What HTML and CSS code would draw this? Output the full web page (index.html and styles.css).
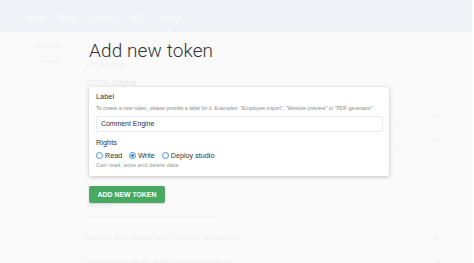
FILE: index.html
```html
<!DOCTYPE html>
<html lang="en">
<head>
<meta charset="utf-8">
<title>Add new token</title>
<link rel="stylesheet" href="styles.css">
</head>
<body>
<div class="page">
  <header class="nav">
    <span class="nav-item">Home</span>
    <span class="nav-item">Docs</span>
    <span class="nav-item">Schemas</span>
    <span class="nav-item">API</span>
    <span class="nav-item active">Settings</span>
  </header>
  <div class="layout">
    <aside class="sidebar">
      <div class="side-item">Overview</div>
      <div class="side-item sub">Tokens</div>
    </aside>
    <main class="content">
      <h2 class="bg-title">API Settings</h2>
      <h3 class="bg-section">CORS Origins</h3>
      <div class="bg-row"><span></span><span class="dot"></span></div>
      <div class="bg-row"><span></span><span class="dot"></span></div>
      <h3 class="bg-section tokens">Tokens</h3>
      <div class="bg-row"><span>Comment Import (Read / Write) - created 2 minutes ago</span><span class="dot"></span></div>
      <div class="bg-row"><span>Website preview (Read / Write) - created 4 months ago</span><span class="dot"></span></div>
    </main>
  </div>
</div>

<div class="overlay">
  <div class="dialog">
    <h1 class="dialog-title">Add new token</h1>
    <div class="card">
      <div class="field-label">Label</div>
      <div class="field-help">To create a new token, please provide a label for it. Examples: "Employee import", "Website preview" or "PDF generator"</div>
      <div class="text-input">Comment Engine</div>
      <div class="field-label rights">Rights</div>
      <div class="radios">
        <span class="radio"><span class="radio-circle"></span>Read</span>
        <span class="radio"><span class="radio-circle checked"></span>Write</span>
        <span class="radio"><span class="radio-circle"></span>Deploy studio</span>
      </div>
      <div class="field-hint">Can read, write and delete data.</div>
    </div>
    <button class="btn-primary">ADD NEW TOKEN</button>
  </div>
</div>
</body>
</html>
```

FILE: styles.css
```css
* {
  box-sizing: border-box;
}

html, body {
  margin: 0;
  padding: 0;
}

body {
  width: 474px;
  height: 263px;
  overflow: hidden;
  background: #fdfdfd;
  font-family: "Liberation Sans", Arial, sans-serif;
  position: relative;
}

/* ---------- background (dimmed) page ---------- */
.page {
  width: 472px;
  height: 263px;
  background: #f9f9f9;
  display: flex;
  flex-direction: column;
}

.nav {
  height: 32px;
  background: #eef3f7;
  display: flex;
  align-items: center;
  padding-left: 26px;
  gap: 14px;
  flex-shrink: 0;
}

.nav-item {
  font-size: 7px;
  color: #f8fafc;
  padding-top: 2px;
  position: relative;
}

.nav-item.active::after {
  content: "";
  position: absolute;
  left: 50%;
  bottom: -12px;
  margin-left: -3px;
  border-left: 3px solid transparent;
  border-right: 3px solid transparent;
  border-bottom: 3px solid #f9f9f9;
}

.layout {
  flex: 1;
  display: flex;
}

.sidebar {
  width: 72px;
  padding-top: 10px;
  border-right: 1px solid #f7f7f7;
  display: flex;
  flex-direction: column;
  align-items: flex-end;
  padding-right: 10px;
  gap: 7px;
}

.side-item {
  font-size: 6px;
  line-height: 8px;
  color: #ececec;
}

.content {
  flex: 0 0 370px;
  padding-left: 14px;
  padding-top: 29px;
  display: flex;
  flex-direction: column;
  align-items: stretch;
}

.bg-title {
  margin: 0;
  font-size: 7px;
  line-height: 8px;
  font-weight: normal;
  color: #efefef;
}

.bg-section {
  margin: 9px 0 0;
  align-self: flex-start;
  font-size: 8px;
  line-height: 10px;
  font-weight: normal;
  color: #e3e6e9;
  padding-bottom: 2px;
  border-bottom: 1px solid #f0f0f0;
}

.bg-section.tokens {
  margin-top: 50px;
  padding-bottom: 5px;
  width: 130px;
  color: #eceef0;
}

.bg-row {
  height: 23px;
  display: flex;
  align-items: center;
  justify-content: space-between;
  font-size: 6px;
  color: #ededed;
  padding-right: 3px;
  border-bottom: 1px solid #f6f6f6;
}

.bg-section + .bg-row {
  margin-top: 14px;
}

.bg-section.tokens + .bg-row {
  margin-top: 10px;
}

.dot {
  width: 3px;
  height: 3px;
  border-radius: 50%;
  background: #ececec;
}

/* ---------- dialog overlay ---------- */
.overlay {
  position: absolute;
  inset: 0;
  background: rgba(255, 255, 255, 0.15);
}

.dialog {
  padding: 41px 0 0 89px;
  display: flex;
  flex-direction: column;
  align-items: flex-start;
}

.dialog-title {
  margin: 0;
  font-family: "Roboto", "Liberation Sans", sans-serif;
  font-weight: 300;
  font-size: 19px;
  line-height: 20px;
  color: #333333;
  letter-spacing: 0.1px;
}

.card {
  margin-top: 26px;
  width: 300px;
  background: #ffffff;
  border-radius: 2px;
  box-shadow: 0 1px 4px rgba(0, 0, 0, 0.22), 0 0 1px rgba(0, 0, 0, 0.12);
  padding: 5px 6px 7px 7px;
  display: flex;
  flex-direction: column;
}

.field-label {
  font-size: 7.4px;
  line-height: 9px;
  color: #333333;
}

.field-label.rights {
  margin-top: 6px;
  line-height: 10px;
}

.field-help {
  margin-top: 3px;
  font-size: 5.2px;
  line-height: 8px;
  color: #8c8c8c;
  white-space: nowrap;
}

.text-input {
  margin-top: 4px;
  height: 16px;
  border: 1px solid #ebebeb;
  border-radius: 2px;
  padding-left: 4px;
  font-size: 6.9px;
  line-height: 14px;
  color: #2e2e2e;
}

.radios {
  margin-top: 2px;
  height: 10px;
  display: flex;
  align-items: center;
  gap: 7px;
}

.radio {
  display: inline-flex;
  align-items: center;
  font-size: 7.2px;
  color: #333333;
}

.radio-circle {
  width: 7px;
  height: 7px;
  border-radius: 50%;
  border: 1px solid #4a8fd4;
  background: #ffffff;
  margin-right: 2px;
  position: relative;
}

.radio-circle.checked {
  background: #e3eefa;
}

.radio-circle.checked::after {
  content: "";
  position: absolute;
  left: 1px;
  top: 1px;
  width: 3px;
  height: 3px;
  border-radius: 50%;
  background: #2f7fd0;
}

.field-hint {
  margin-top: 1px;
  font-size: 5.9px;
  line-height: 8px;
  color: #9a9a9a;
}

.btn-primary {
  margin-top: 10px;
  width: 76px;
  height: 17px;
  border: 0;
  border-radius: 2px;
  background: #48a963;
  color: #ffffff;
  font-family: "Liberation Sans", Arial, sans-serif;
  font-size: 6.9px;
  font-weight: bold;
  padding: 0;
  box-shadow: 0 1px 2px rgba(0, 0, 0, 0.15);
}
```
